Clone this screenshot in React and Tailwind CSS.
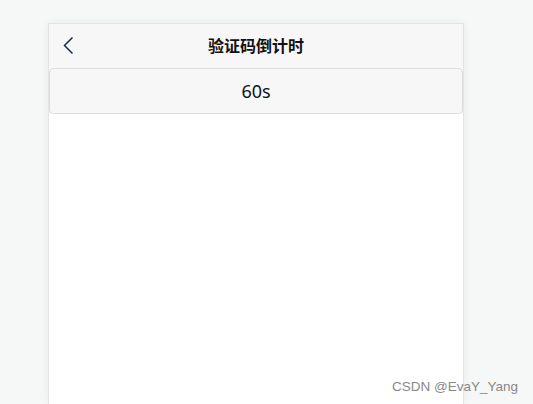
export default function App() {
  return (
    <div
      className="relative h-[404px] w-[533px] overflow-hidden bg-[#f6f7f7]"
      style={{ fontFamily: '"Noto Sans", "Noto Sans CJK SC", sans-serif' }}
    >
      <div className="ml-[48px] mt-[23px] flex h-[381px] w-[416px] flex-col border border-b-0 border-[#e3e3e3] bg-white shadow-[0_0_8px_rgba(0,0,0,0.06)]">
        <div className="relative flex h-[44px] items-center justify-center bg-[#f7f7f7]">
          <svg
            className="absolute left-[13px] top-[12px]"
            width="12"
            height="19"
            viewBox="0 0 12 19"
            fill="none"
          >
            <path d="M10.5 1.5 L2.5 9.5 L10.5 17.5" stroke="#1b2a44" strokeWidth="1.5" />
          </svg>
          <span className="text-[16px] font-bold text-[#111]">验证码倒计时</span>
        </div>
        <div className="flex h-[46px] items-center justify-center rounded-[4px] border border-[#dddddd] bg-[#f7f7f7]">
          <span className="text-[18px] text-[#111]">60s</span>
        </div>
        <div className="flex-1" />
      </div>
      <span
        className="absolute left-[392px] top-[377px] text-[13.5px] text-[#888]"
        style={{ fontFamily: '"Liberation Sans", Arial, sans-serif' }}
      >
        CSDN @EvaY_Yang
      </span>
    </div>
  );
}
